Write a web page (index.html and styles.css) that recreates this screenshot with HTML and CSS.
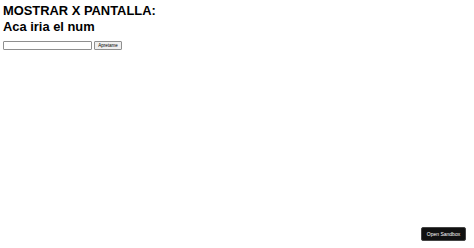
FILE: index.html
```html
<!DOCTYPE html>
<html>
<head>
<meta charset="utf-8">
<link rel="stylesheet" href="styles.css">
</head>
<body>
<div class="page">
  <h1 class="title">MOSTRAR X PANTALLA:<br>Aca iria el num</h1>
  <div class="form">
    <input class="field" type="text">
    <button class="btn">Apretame</button>
  </div>
</div>
<button class="sandbox">Open Sandbox</button>
</body>
</html>
```
FILE: styles.css
```css
html, body { margin: 0; padding: 0; background: #fff; }
body { font-family: "Liberation Sans", Arial, sans-serif; color: #000; }
.page { padding: 3px 3px; }
.title { margin: 0; font-size: 12.9px; line-height: 15.5px; font-weight: bold; }
.form { display: flex; align-items: center; gap: 2px; margin-top: 7px; }
.field { box-sizing: border-box; width: 89px; height: 9px; margin: 0; padding: 0; border: 1px solid #8f8f8f; border-radius: 1px; background: #fff; }
.btn { box-sizing: border-box; height: 9px; width: 28px; margin: 0; padding: 0; font-family: "Liberation Sans", Arial, sans-serif; font-size: 4.5px; line-height: 7px; color: #000; background: #efefef; border: 1px solid #8f8f8f; border-radius: 1px; }
.sandbox { position: fixed; right: 8px; bottom: 7px; box-sizing: border-box; width: 45px; height: 14px; padding: 0; border: 1px solid #444; border-radius: 2px; background: #111; color: #fff; font-family: "Liberation Sans", Arial, sans-serif; font-size: 5px; }
```
